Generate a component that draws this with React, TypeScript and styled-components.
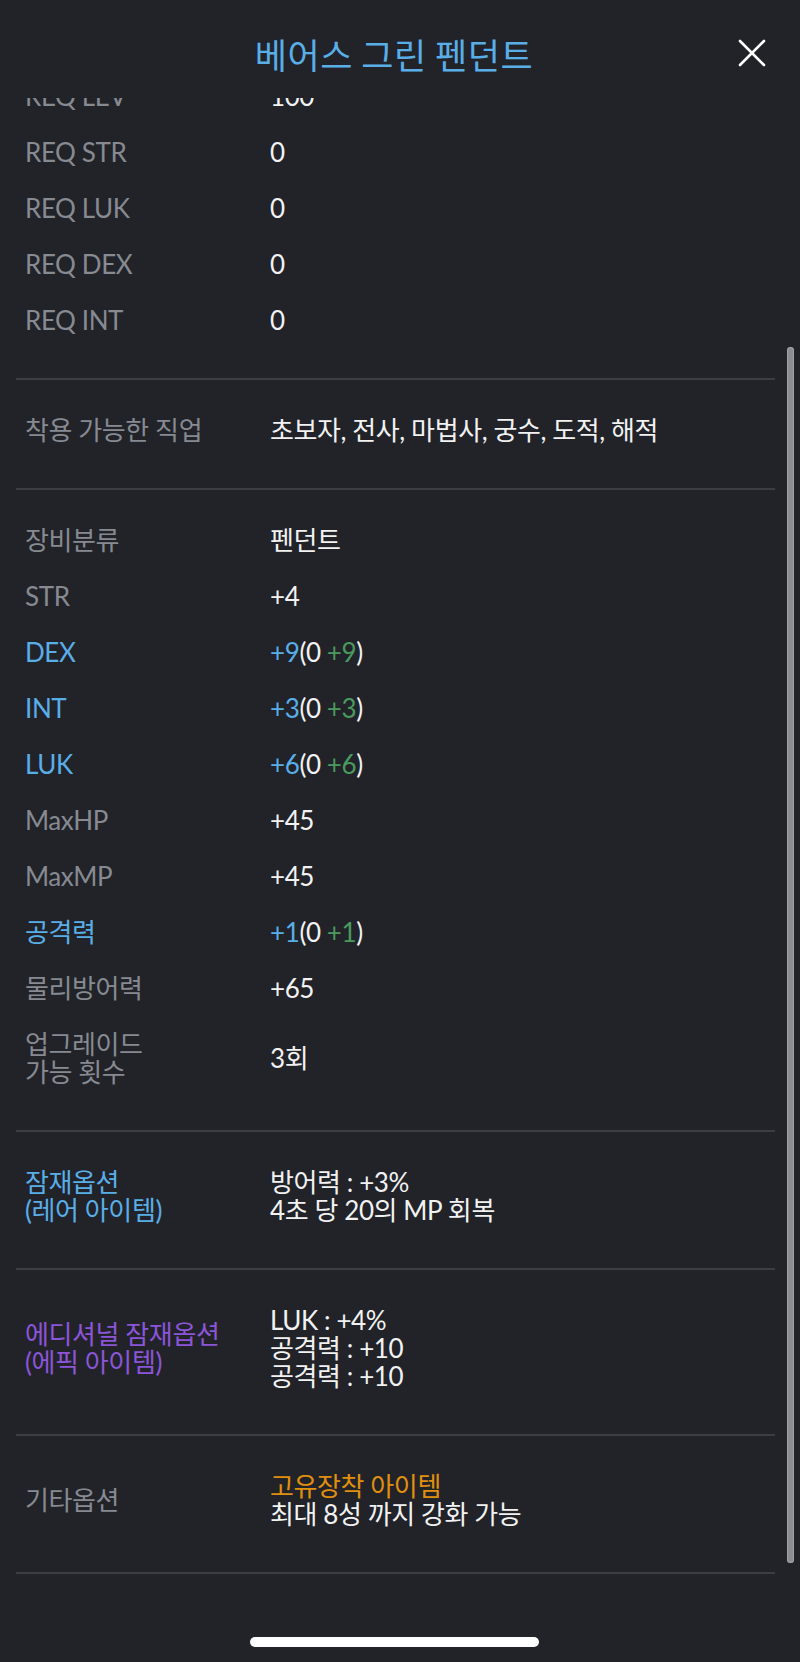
import React, { useLayoutEffect, useRef } from "react";
import styled, { createGlobalStyle } from "styled-components";

type Tone = "label" | "value" | "blue" | "green" | "purple" | "orange";

const COLORS: Record<Tone, string> = {
  label: "#878a91",
  value: "#f2f2f2",
  blue: "#5aaee8",
  green: "#4a9a5e",
  purple: "#8c55d8",
  orange: "#e0900e",
};

const BG = "#212329";

const GlobalStyle = createGlobalStyle`
  html, body { margin: 0; padding: 0; background: ${BG}; }
  body {
    font-family: "Lato", "Noto Sans CJK KR", sans-serif;
    -webkit-font-smoothing: antialiased;
  }
  * { box-sizing: border-box; }
`;

const Screen = styled.div`
  position: relative;
  width: 800px;
  height: 1662px;
  display: flex;
  flex-direction: column;
  background: ${BG};
  overflow: hidden;
`;

const Header = styled.header`
  flex: 0 0 98px;
  display: grid;
  grid-template-columns: 80px 1fr 80px;
  align-items: center;
  padding: 8px 12px 0 0;
  background: ${BG};
  position: relative;
  z-index: 1;
`;

const Title = styled.h1`
  grid-column: 2;
  margin: 0;
  text-align: center;
  font-family: "Noto Sans CJK KR", sans-serif;
  font-size: 35px;
  font-weight: 400;
  line-height: 1;
  letter-spacing: 0.5px;
  color: ${COLORS.blue};
`;

const CloseButton = styled.button`
  grid-column: 3;
  justify-self: end;
  margin-right: 22px;
  width: 28px;
  height: 28px;
  padding: 0;
  border: 0;
  background: transparent;
  display: flex;
  align-items: center;
  justify-content: center;
  cursor: pointer;
`;

const ScrollArea = styled.main`
  flex: 1;
  min-height: 0;
  overflow-y: auto;
  position: relative;
  scrollbar-width: none;
  &::-webkit-scrollbar {
    display: none;
  }
`;

const Content = styled.div`
  padding: 0 25px 160px 16px;
`;

const Group = styled.section`
  padding: 22px 0 30px;
  border-bottom: 2px solid #3a3d44;
`;

const Hero = styled.div`
  display: flex;
  flex-direction: column;
  align-items: center;
  gap: 14px;
  padding: 30px 0 36px;
`;

const HeroIcon = styled.div`
  width: 96px;
  height: 96px;
  border-radius: 16px;
  background: #2b2e36;
  display: flex;
  align-items: center;
  justify-content: center;
`;

const HeroCaption = styled.div`
  font-size: 22px;
  color: ${COLORS.label};
`;

const Row = styled.div`
  display: grid;
  grid-template-columns: 245px 1fr;
  align-items: center;
  padding: 14px 0 14px 9px;
  font-size: 26px;
  line-height: 28px;
  letter-spacing: -0.4px;
`;

const Label = styled.div<{ $tone: Tone }>`
  color: ${(p) => COLORS[p.$tone]};
  white-space: pre-line;
`;

const Value = styled.div`
  display: flex;
  flex-direction: column;
  color: ${COLORS.value};
`;

const Line = styled.div``;

const Seg = styled.span<{ $tone: Tone }>`
  color: ${(p) => COLORS[p.$tone]};
`;

const ScrollIndicator = styled.div`
  position: absolute;
  top: 347px;
  right: 6px;
  width: 7px;
  height: 1216px;
  border-radius: 4px;
  background: #8c8c91;
  box-shadow: inset 0 0 0 1px #a0a0a5;
  z-index: 2;
`;

const HomeIndicator = styled.div`
  position: absolute;
  left: 250px;
  bottom: 15px;
  width: 289px;
  height: 10px;
  border-radius: 5px;
  background: #ffffff;
  z-index: 2;
`;

type Piece = [string, Tone];
type RowData = { label: string; tone?: Tone; lines: Piece[][] };

const plain = (s: string): Piece[][] => [[[s, "value"]]];
const bonus = (total: string, base: string, extra: string): Piece[][] => [
  [
    [total, "blue"],
    ["(" + base + " ", "value"],
    [extra, "green"],
    [")", "value"],
  ],
];

const reqRows: RowData[] = [
  { label: "REQ LEV", lines: plain("100") },
  { label: "REQ STR", lines: plain("0") },
  { label: "REQ LUK", lines: plain("0") },
  { label: "REQ DEX", lines: plain("0") },
  { label: "REQ INT", lines: plain("0") },
];

const jobRows: RowData[] = [
  { label: "착용 가능한 직업", lines: plain("초보자, 전사, 마법사, 궁수, 도적, 해적") },
];

const statRows: RowData[] = [
  { label: "장비분류", lines: plain("펜던트") },
  { label: "STR", lines: plain("+4") },
  { label: "DEX", tone: "blue", lines: bonus("+9", "0", "+9") },
  { label: "INT", tone: "blue", lines: bonus("+3", "0", "+3") },
  { label: "LUK", tone: "blue", lines: bonus("+6", "0", "+6") },
  { label: "MaxHP", lines: plain("+45") },
  { label: "MaxMP", lines: plain("+45") },
  { label: "공격력", tone: "blue", lines: bonus("+1", "0", "+1") },
  { label: "물리방어력", lines: plain("+65") },
  { label: "업그레이드\n가능 횟수", lines: plain("3회") },
];

const potentialRows: RowData[] = [
  {
    label: "잠재옵션\n(레어 아이템)",
    tone: "blue",
    lines: [[["방어력 : +3%", "value"]], [["4초 당 20의 MP 회복", "value"]]],
  },
];

const additionalRows: RowData[] = [
  {
    label: "에디셔널 잠재옵션\n(에픽 아이템)",
    tone: "purple",
    lines: [
      [["LUK : +4%", "value"]],
      [["공격력 : +10", "value"]],
      [["공격력 : +10", "value"]],
    ],
  },
];

const etcRows: RowData[] = [
  {
    label: "기타옵션",
    lines: [[["고유장착 아이템", "orange"]], [["최대 8성 까지 강화 가능", "value"]]],
  },
];

function InfoRows({ rows }: { rows: RowData[] }) {
  return (
    <>
      {rows.map((r) => (
        <Row key={r.label}>
          <Label $tone={r.tone ?? "label"}>{r.label}</Label>
          <Value>
            {r.lines.map((line, i) => (
              <Line key={i}>
                {line.map(([t, tone], j) => (
                  <Seg key={j} $tone={tone}>
                    {t}
                  </Seg>
                ))}
              </Line>
            ))}
          </Value>
        </Row>
      ))}
    </>
  );
}

function PendantIcon() {
  return (
    <svg width="64" height="64" viewBox="0 0 64 64" fill="none">
      <path d="M14 10 Q32 40 50 10" stroke="#c9b26a" strokeWidth="3" fill="none" />
      <circle cx="32" cy="40" r="12" fill="#3fa45b" stroke="#2a7a40" strokeWidth="2" />
      <circle cx="28" cy="36" r="3" fill="#9be0a8" />
    </svg>
  );
}

function CloseIcon() {
  return (
    <svg width="28" height="28" viewBox="0 0 28 28">
      <path
        d="M2 2 L26 26 M26 2 L2 26"
        stroke="#ffffff"
        strokeWidth="2.6"
        strokeLinecap="round"
      />
    </svg>
  );
}

export default function App() {
  const scrollRef = useRef<HTMLElement>(null);
  const reqRef = useRef<HTMLElement>(null);

  useLayoutEffect(() => {
    const s = scrollRef.current;
    const g = reqRef.current;
    if (s && g) {
      s.scrollTop = g.offsetTop + 52;
    }
  }, []);

  return (
    <>
      <GlobalStyle />
      <Screen>
        <Header>
          <Title>베어스 그린 펜던트</Title>
          <CloseButton aria-label="닫기">
            <CloseIcon />
          </CloseButton>
        </Header>
        <ScrollArea ref={scrollRef}>
          <Content>
            <Group>
              <Hero>
                <HeroIcon>
                  <PendantIcon />
                </HeroIcon>
                <HeroCaption>장신구</HeroCaption>
              </Hero>
            </Group>
            <Group ref={reqRef}>
              <InfoRows rows={reqRows} />
            </Group>
            <Group>
              <InfoRows rows={jobRows} />
            </Group>
            <Group>
              <InfoRows rows={statRows} />
            </Group>
            <Group>
              <InfoRows rows={potentialRows} />
            </Group>
            <Group>
              <InfoRows rows={additionalRows} />
            </Group>
            <Group>
              <InfoRows rows={etcRows} />
            </Group>
          </Content>
        </ScrollArea>
        <ScrollIndicator />
        <HomeIndicator />
      </Screen>
    </>
  );
}
